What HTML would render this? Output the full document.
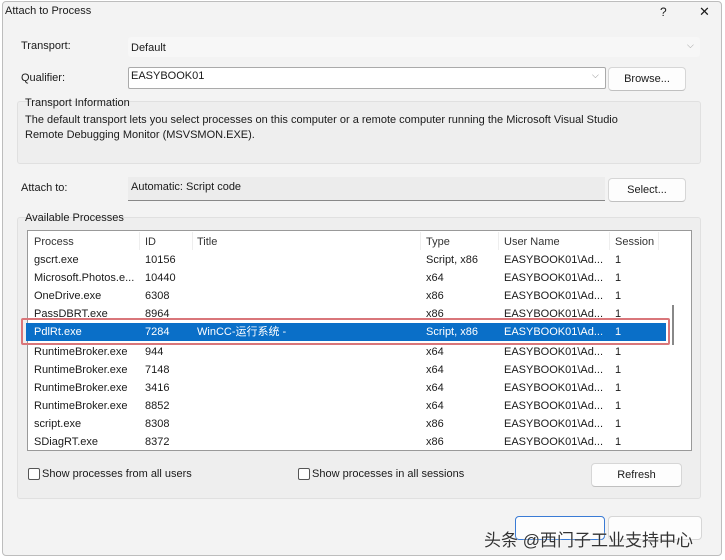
<!DOCTYPE html>
<html><head><meta charset="utf-8"><style>
body{margin:0;width:725px;height:560px;background:#fff;font-family:"Liberation Sans","Noto Sans CJK SC",sans-serif;font-size:11px;color:#1a1a1a;position:relative;overflow:hidden}
.a{position:absolute;white-space:nowrap}
.dlg{left:2px;top:1px;width:718px;height:553px;background:#f3f3f3;border:1px solid #bdbdbd;border-radius:4px}
.btn{background:#fdfdfd;border:1px solid #d6d6d6;border-bottom-color:#c0c0c0;border-radius:4px;text-align:center;line-height:22px}
.grp{border:1px solid #e0e0e0;background:#eeeeee;border-radius:3px}
.row{position:absolute;left:29px;width:630px;height:18px;line-height:18px}
.row span{position:absolute}
.cb{width:10px;height:10px;border:1px solid #555;border-radius:2px;background:#fff}
</style></head><body>
<div class="a dlg"></div>
<div class="a" style="left:5px;top:5px">Attach to Process</div>
<div class="a" style="left:660px;top:5px;font-size:12px">?</div>
<div class="a" style="left:699px;top:4px;font-size:13px">✕</div>

<div class="a" style="left:21px;top:40px">Transport:</div>
<div class="a" style="left:128px;top:37px;width:572px;height:20px;background:#f7f7f7;border-radius:3px"></div>
<div class="a" style="left:131px;top:42px">Default</div>
<div class="a" style="left:687px;top:40px;color:#999;font-size:9px">⌵</div>

<div class="a" style="left:21px;top:72px">Qualifier:</div>
<div class="a" style="left:128px;top:67px;width:476px;height:20px;background:#fff;border:1px solid #aaa;border-radius:2px"></div>
<div class="a" style="left:131px;top:70px">EASYBOOK01</div>
<div class="a" style="left:592px;top:70px;color:#888;font-size:9px">⌵</div>
<div class="a btn" style="left:608px;top:67px;width:76px;height:22px">Browse...</div>

<div class="a grp" style="left:17px;top:101px;width:682px;height:61px"></div>
<div class="a" style="left:25px;top:97px">Transport Information</div>
<div class="a" style="left:25px;top:114px">The default transport lets you select processes on this computer or a remote computer running the Microsoft Visual Studio</div>
<div class="a" style="left:25px;top:129px">Remote Debugging Monitor (MSVSMON.EXE).</div>

<div class="a" style="left:21px;top:182px">Attach to:</div>
<div class="a" style="left:128px;top:177px;width:477px;height:23px;background:#ececec;border-bottom:1px solid #888"></div>
<div class="a" style="left:131px;top:181px">Automatic: Script code</div>
<div class="a btn" style="left:608px;top:178px;width:76px;height:22px">Select...</div>

<div class="a grp" style="left:17px;top:217px;width:682px;height:280px"></div>
<div class="a" style="left:25px;top:212px">Available Processes</div>
<div class="a" style="left:27px;top:230px;width:663px;height:219px;background:#fff;border:1px solid #999"></div>
<div class="a" style="left:672px;top:305px;width:2px;height:40px;background:#888"></div>
<div class="row" style="top:233px;color:#333"><span style="left:5px">Process</span><span style="left:116px">ID</span><span style="left:168px">Title</span><span style="left:397px">Type</span><span style="left:475px">User Name</span><span style="left:586px">Session</span></div>
<div class="a" style="left:139px;top:232px;width:1px;height:18px;background:#eee"></div>
<div class="a" style="left:192px;top:232px;width:1px;height:18px;background:#eee"></div>
<div class="a" style="left:420px;top:232px;width:1px;height:18px;background:#eee"></div>
<div class="a" style="left:498px;top:232px;width:1px;height:18px;background:#eee"></div>
<div class="a" style="left:609px;top:232px;width:1px;height:18px;background:#eee"></div>
<div class="a" style="left:658px;top:232px;width:1px;height:18px;background:#eee"></div>

<div class="row" style="top:251px"><span style="left:5px">gscrt.exe</span><span style="left:116px">10156</span><span style="left:397px">Script, x86</span><span style="left:475px">EASYBOOK01\Ad...</span><span style="left:586px">1</span></div>
<div class="row" style="top:269px"><span style="left:5px">Microsoft.Photos.e...</span><span style="left:116px">10440</span><span style="left:397px">x64</span><span style="left:475px">EASYBOOK01\Ad...</span><span style="left:586px">1</span></div>
<div class="row" style="top:287px"><span style="left:5px">OneDrive.exe</span><span style="left:116px">6308</span><span style="left:397px">x86</span><span style="left:475px">EASYBOOK01\Ad...</span><span style="left:586px">1</span></div>
<div class="row" style="top:305px"><span style="left:5px">PassDBRT.exe</span><span style="left:116px">8964</span><span style="left:397px">x86</span><span style="left:475px">EASYBOOK01\Ad...</span><span style="left:586px">1</span></div>
<div class="a" style="left:21px;top:318px;width:649px;height:27px;border:2px solid #d9767a;border-radius:2px;box-sizing:border-box"></div>
<div class="row" style="top:323px;left:26px;width:640px;background:#0a6fc8;color:#fff"><span style="left:8px">PdlRt.exe</span><span style="left:119px">7284</span><span style="left:171px">WinCC-运行系统 -</span><span style="left:400px">Script, x86</span><span style="left:478px">EASYBOOK01\Ad...</span><span style="left:589px">1</span></div>
<div class="row" style="top:343px"><span style="left:5px">RuntimeBroker.exe</span><span style="left:116px">944</span><span style="left:397px">x64</span><span style="left:475px">EASYBOOK01\Ad...</span><span style="left:586px">1</span></div>
<div class="row" style="top:361px"><span style="left:5px">RuntimeBroker.exe</span><span style="left:116px">7148</span><span style="left:397px">x64</span><span style="left:475px">EASYBOOK01\Ad...</span><span style="left:586px">1</span></div>
<div class="row" style="top:379px"><span style="left:5px">RuntimeBroker.exe</span><span style="left:116px">3416</span><span style="left:397px">x64</span><span style="left:475px">EASYBOOK01\Ad...</span><span style="left:586px">1</span></div>
<div class="row" style="top:397px"><span style="left:5px">RuntimeBroker.exe</span><span style="left:116px">8852</span><span style="left:397px">x64</span><span style="left:475px">EASYBOOK01\Ad...</span><span style="left:586px">1</span></div>
<div class="row" style="top:415px"><span style="left:5px">script.exe</span><span style="left:116px">8308</span><span style="left:397px">x86</span><span style="left:475px">EASYBOOK01\Ad...</span><span style="left:586px">1</span></div>
<div class="row" style="top:433px"><span style="left:5px">SDiagRT.exe</span><span style="left:116px">8372</span><span style="left:397px">x86</span><span style="left:475px">EASYBOOK01\Ad...</span><span style="left:586px">1</span></div>

<div class="a cb" style="left:28px;top:468px"></div>
<div class="a" style="left:42px;top:468px">Show processes from all users</div>
<div class="a cb" style="left:298px;top:468px"></div>
<div class="a" style="left:312px;top:468px">Show processes in all sessions</div>
<div class="a btn" style="left:591px;top:463px;width:89px;height:22px">Refresh</div>

<div class="a" style="left:515px;top:516px;width:88px;height:22px;border:1px solid #3a7bd5;border-radius:4px;background:#fdfdfd"></div>
<div class="a" style="left:608px;top:516px;width:92px;height:22px;border:1px solid #d6d6d6;border-radius:4px;background:#fdfdfd"></div>
<div class="a" style="left:484px;top:526px;font-size:17px;color:#333;text-shadow:0 0 2px #fff">头条 @西门子工业支持中心</div>
</body></html>
